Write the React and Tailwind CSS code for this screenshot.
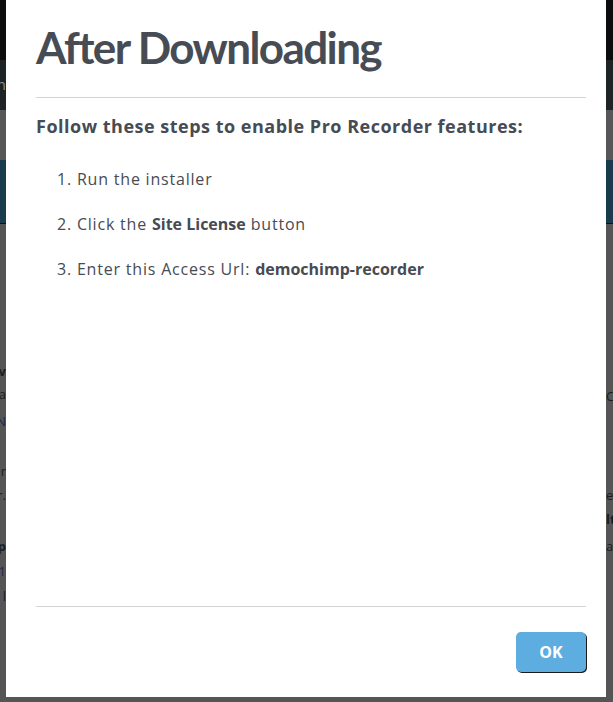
import React from "react";

const font = { fontFamily: "'Open Sans', 'Noto Sans', sans-serif" };

function LeftFrag({ top, children, className = "" }) {
  return (
    <div
      className={"absolute right-0 whitespace-nowrap text-[13px] leading-[16px] " + className}
      style={{ top }}
    >
      {children}
    </div>
  );
}

function RightFrag({ top, children, className = "" }) {
  return (
    <div
      className={"absolute left-0 whitespace-nowrap text-[13px] leading-[16px] " + className}
      style={{ top }}
    >
      {children}
    </div>
  );
}

function Strip({ side }) {
  const left = side === "left";
  return (
    <div className="relative h-full overflow-hidden">
      <div className="flex flex-col h-full">
        <div className="h-[60px] bg-[#0c0c0c]" />
        <div className="h-[50px] bg-[#1e2326]" />
        <div className="h-[50px] bg-[#575757]" />
        <div className="h-[64px] bg-[#1a3a4e] border-b border-[#111]" />
        <div className="flex-1 bg-[#555555]" />
      </div>
      {left ? (
        <>
          <LeftFrag top={76} className="text-[#8c9196] text-[15px]">Sign in</LeftFrag>
          <LeftFrag top={363} className="text-[#1c1c1c] font-bold">Hov</LeftFrag>
          <LeftFrag top={386} className="text-[#1c1c1c]">a</LeftFrag>
          <LeftFrag top={413} className="text-[#1c2a44]">N</LeftFrag>
          <LeftFrag top={463} className="text-[#1c1c1c]">r</LeftFrag>
          <LeftFrag top={487} className="text-[#1c1c1c]">r.</LeftFrag>
          <LeftFrag top={538} className="text-[#1c1c1c] font-bold">up</LeftFrag>
          <LeftFrag top={563} className="text-[#1c2a50]">1</LeftFrag>
          <LeftFrag top={588} className="text-[#1c1c1c]">l</LeftFrag>
        </>
      ) : (
        <>
          <RightFrag top={388} className="text-[#1c1c1c]">C</RightFrag>
          <RightFrag top={487} className="text-[#1c1c1c]">er</RightFrag>
          <RightFrag top={511} className="text-[#1c1c1c] font-bold">lt</RightFrag>
          <RightFrag top={538} className="text-[#1c1c1c]">a</RightFrag>
        </>
      )}
    </div>
  );
}

export default function App() {
  return (
    <div className="w-[613px] h-[702px] overflow-hidden bg-[#555555] flex" style={font}>
      <div className="w-[6px] h-full">
        <Strip side="left" />
      </div>
      <div className="w-[600px] h-[697px] bg-white flex flex-col pl-[30px] pr-[20px] text-[#474b53]">
        <h1 className="pt-[23px] text-[44px] leading-[48px] font-bold tracking-[-1.6px] font-[Lato,sans-serif]">
          After Downloading
        </h1>
        <div className="mt-[26px] h-px bg-[#d4d4d4]" />
        <div className="flex-1">
          <h2 className="mt-[16px] text-[18px] leading-[24px] font-bold tracking-[0.5px]">
            Follow these steps to enable Pro Recorder features:
          </h2>
          <ol className="mt-[29px] pl-[21px] flex flex-col gap-[21px] text-[16px] leading-[24px] tracking-[0.8px]">
            <li>1. Run the installer</li>
            <li>
              2. Click the <span className="font-bold tracking-[0px]">Site License</span> button
            </li>
            <li>
              3. Enter this Access Url: <span className="font-bold tracking-[0px]">demochimp-recorder</span>
            </li>
          </ol>
        </div>
        <div className="h-px bg-[#d4d4d4]" />
        <div className="flex justify-end pt-[25px] pb-[25px]">
          <button className="w-[70px] h-[40px] rounded-[5px] bg-[#5eade0] text-white font-bold text-[16px] shadow-[1px_1px_0_#1a1a1a]">
            OK
          </button>
        </div>
      </div>
      <div className="flex-1 h-full">
        <Strip side="right" />
      </div>
    </div>
  );
}
